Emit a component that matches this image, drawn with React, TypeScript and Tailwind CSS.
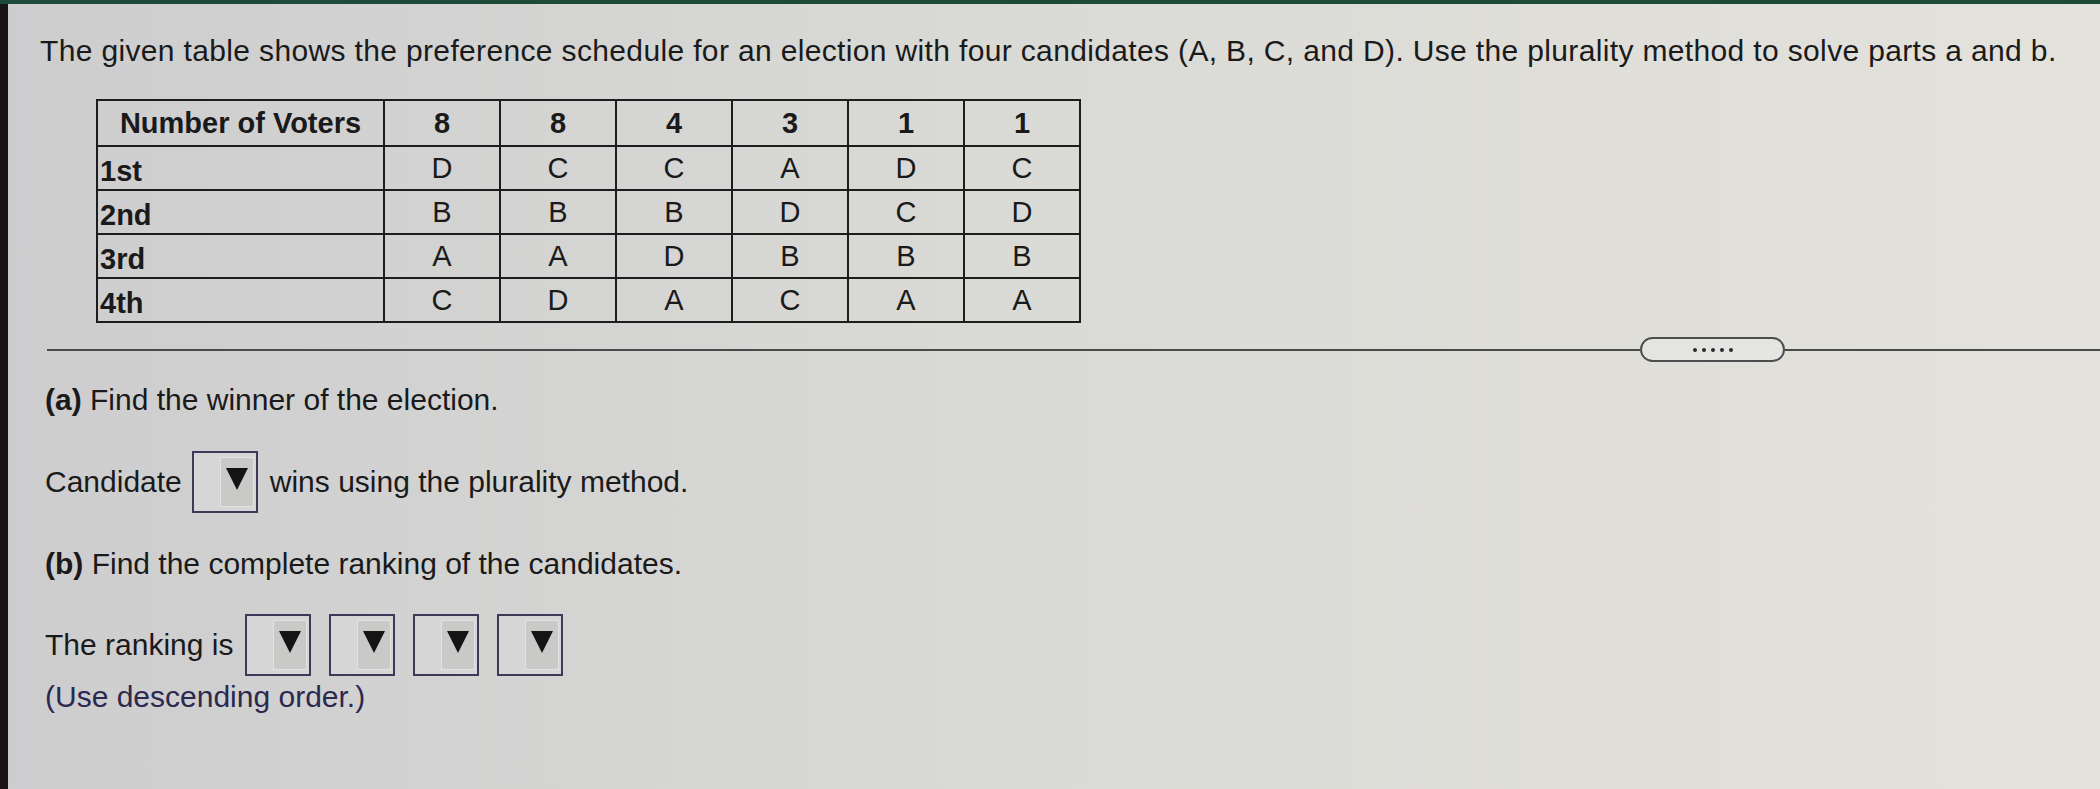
import React from "react";

const counts = ["8", "8", "4", "3", "1", "1"];
const rows: { label: string; picks: string[] }[] = [
	{ label: "1st", picks: ["D", "C", "C", "A", "D", "C"] },
	{ label: "2nd", picks: ["B", "B", "B", "D", "C", "D"] },
	{ label: "3rd", picks: ["A", "A", "D", "B", "B", "B"] },
	{ label: "4th", picks: ["C", "D", "A", "C", "A", "A"] },
];

const Dropdown: React.FC = () => (
	<div className="w-[66px] h-[62px] border-2 border-[#3b3a58] bg-[#d6d6d6] flex justify-end items-stretch p-[4px] pr-[2px] shrink-0">
		<div className="w-[34px] bg-[#c9c9c8] border border-[#e2e2e2] flex justify-center pt-[10px]">
			<svg width="22" height="22" viewBox="0 0 22 22">
				<polygon points="0,0 22,0 11,22" fill="#141414" />
			</svg>
		</div>
	</div>
);

const App: React.FC = () => {
	return (
		<div
			className="w-[2100px] h-[789px] overflow-hidden flex flex-col bg-gradient-to-r from-[#cdcdcf] via-[#dadad6] to-[#e4e2dc] text-[#1a1a1a]"
			style={{ fontFamily: '"Liberation Sans", Arial, sans-serif' }}
		>
			<div className="h-[4px] w-full bg-[#1e4a3a] shrink-0" />
			<div className="flex flex-1">
				<div className="w-[8px] bg-[#1b1416] shrink-0" />
				<div className="flex-1 flex flex-col">
					<p className="pl-[32px] mt-[30px] text-[30px] leading-[34px] tracking-[0.35px] whitespace-nowrap">
						The given table shows the preference schedule for an election with four candidates (A, B, C, and D). Use the
						plurality method to solve parts a and b.
					</p>

					<table className="ml-[88px] mt-[31px] border-collapse text-[29px] leading-none w-[983px] table-fixed">
						<colgroup>
							<col className="w-[287px]" />
							{counts.map((_, i) => (
								<col key={i} className="w-[116px]" />
							))}
						</colgroup>
						<tbody>
							<tr className="h-[46px]">
								<td className="border-2 border-[#1d1d1d] font-bold text-center p-0">Number of Voters</td>
								{counts.map((c, i) => (
									<td key={i} className="border-2 border-[#1d1d1d] font-bold text-center p-0">
										{c}
									</td>
								))}
							</tr>
							{rows.map((r) => (
								<tr key={r.label} className="h-[44px]">
									<td className="border-2 border-[#1d1d1d] font-bold pl-[2px] pt-[6px] pb-0">{r.label}</td>
									{r.picks.map((p, i) => (
										<td key={i} className="border-2 border-[#1d1d1d] text-center p-0">
											{p}
										</td>
									))}
								</tr>
							))}
						</tbody>
					</table>

					<div className="mt-[14px] flex items-center pl-[39px]">
						<div className="flex-1 h-[2px] bg-[#4a4a4a]" />
						<div className="w-[145px] h-[25px] rounded-full border-2 border-[#4d4d4d] bg-[#e4e4e2] flex items-center justify-center gap-[5px]">
							{[0, 1, 2, 3, 4].map((i) => (
								<span key={i} className="w-[4px] h-[4px] rounded-full bg-[#2a2a2a]" />
							))}
						</div>
						<div className="w-[315px] h-[2px] bg-[#4a4a4a]" />
					</div>

					<div className="pl-[37px] text-[30px] leading-[34px]">
						<p className="mt-[21px]">
							<span className="font-bold">(a)</span> Find the winner of the election.
						</p>

						<div className="mt-[34px] flex items-center">
							<span className="mr-[10px]">Candidate</span>
							<Dropdown />
							<span className="ml-[12px]">wins using the plurality method.</span>
						</div>

						<p className="mt-[34px]">
							<span className="font-bold">(b)</span> Find the complete ranking of the candidates.
						</p>

						<div className="mt-[33px] flex items-center">
							<span className="mr-[12px]">The ranking is</span>
							<div className="flex gap-[18px]">
								<Dropdown />
								<Dropdown />
								<Dropdown />
								<Dropdown />
							</div>
						</div>

						<p className="mt-[4px] text-[#2b2950]">(Use descending order.)</p>
					</div>
				</div>
			</div>
		</div>
	);
};

export default App;
